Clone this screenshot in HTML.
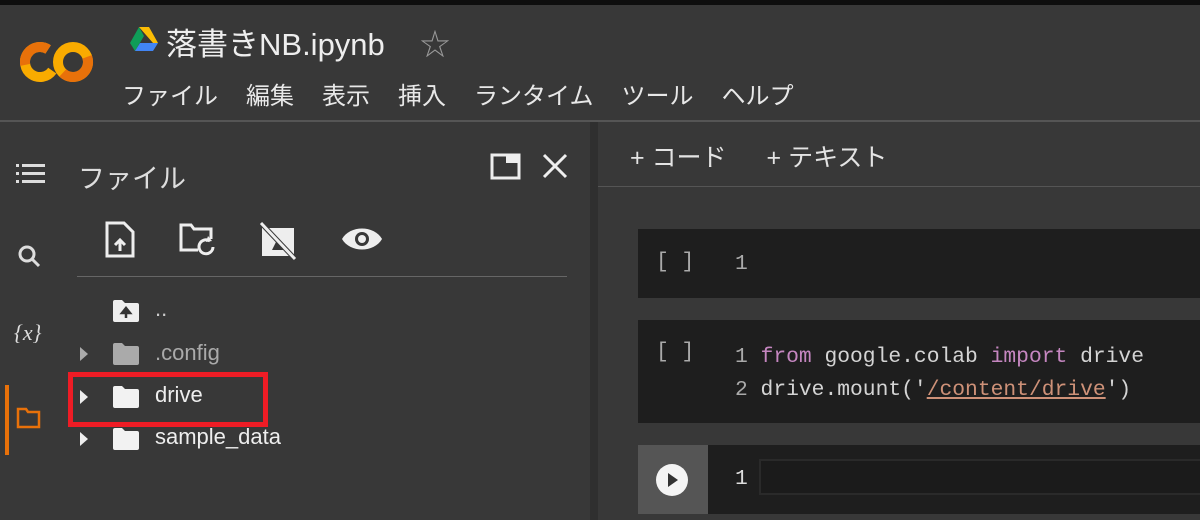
<!DOCTYPE html>
<html><head><meta charset="utf-8"><style>
*{margin:0;padding:0;box-sizing:border-box}
body{width:1200px;height:520px;background:#383838;overflow:hidden;position:relative;font-family:"Liberation Sans","Noto Sans CJK JP",sans-serif;color:#e3e3e3}
.a{position:absolute}
.mono{font-family:"Liberation Mono","Noto Sans CJK JP",monospace;font-size:21.3px;color:#d4d4d4}
</style></head><body>
<div class="a" style="left:0;top:0;width:1200px;height:5px;background:#0e0e0e"></div>
<!-- logo -->
<svg class="a" style="left:20px;top:39px" width="74" height="46" viewBox="0 0 74 46">
<circle cx="53" cy="23" r="15" fill="none" stroke="#f9ab00" stroke-width="10"/>
<circle cx="53" cy="23" r="15" fill="none" stroke="#e8710a" stroke-width="10" stroke-dasharray="40 100" transform="rotate(-20 53 23)"/>
<circle cx="20" cy="23" r="15" fill="none" stroke="#f9ab00" stroke-width="10" stroke-dasharray="70 25" transform="rotate(35 20 23)"/>
<circle cx="20" cy="23" r="15" fill="none" stroke="#e8710a" stroke-width="10" stroke-dasharray="0 35 35 30" transform="rotate(35 20 23)"/>
</svg>
<!-- drive icon -->
<svg class="a" style="left:130px;top:27px" width="28" height="25" viewBox="0 0 28 25">
<polygon points="9,0 19,0 28,16 23,16" fill="#fbbc04"/>
<polygon points="9,0 14,9 5,24 0,16" fill="#0f9d58"/>
<polygon points="5,24 10,16 28,16 23,24" fill="#4285f4"/>
</svg>
<div class="a" style="left:166px;top:19px;font-size:31px;color:#eee">落書きNB.ipynb</div>
<div class="a" style="left:420px;top:20px;font-size:30px;color:#999">☆</div>
<div class="a" style="left:122px;top:76px;font-size:24px;color:#e8e8e8;white-space:nowrap">
<span>ファイル</span><span style="margin-left:28px">編集</span><span style="margin-left:28px">表示</span><span style="margin-left:28px">挿入</span><span style="margin-left:28px">ランタイム</span><span style="margin-left:28px">ツール</span><span style="margin-left:28px">ヘルプ</span></div>
<div class="a" style="left:0;top:120px;width:1200px;height:2px;background:#555"></div>
<!-- left sidebar -->
<svg class="a" style="left:16px;top:163px" width="30" height="22" viewBox="0 0 30 22" fill="#ddd">
<rect x="0" y="1" width="3" height="3"/><rect x="6" y="1" width="23" height="3"/>
<rect x="0" y="9" width="3" height="3"/><rect x="6" y="9" width="23" height="3"/>
<rect x="0" y="17" width="3" height="3"/><rect x="6" y="17" width="23" height="3"/>
</svg>
<svg class="a" style="left:17px;top:244px" width="26" height="26" viewBox="0 0 26 26"><circle cx="10" cy="10" r="7" fill="none" stroke="#ddd" stroke-width="3"/><line x1="15" y1="15" x2="22" y2="22" stroke="#ddd" stroke-width="3"/></svg>
<div class="a" style="left:14px;top:320px;font-size:22px;font-family:'Liberation Serif',serif;font-style:italic;color:#ddd">{<i>x</i>}</div>
<div class="a" style="left:5px;top:385px;width:4px;height:70px;background:#e8710a"></div>
<svg class="a" style="left:16px;top:407px" width="26" height="22" viewBox="0 0 26 22"><path d="M2 2h8l2 3h11v15H2z" fill="none" stroke="#e8710a" stroke-width="2.5"/></svg>
<div class="a" style="left:78px;top:157px;font-size:27px;color:#ddd">ファイル</div>
<svg class="a" style="left:490px;top:152px" width="32" height="28" viewBox="0 0 32 28"><rect x="2" y="3" width="27" height="23" fill="none" stroke="#eee" stroke-width="3"/><rect x="16" y="3" width="13" height="8" fill="#eee"/></svg>
<svg class="a" style="left:541px;top:152px" width="28" height="28" viewBox="0 0 28 28"><path d="M3 3L25 25M25 3L3 25" stroke="#eee" stroke-width="3"/></svg>
<!-- toolbar icons -->
<svg class="a" style="left:104px;top:221px" width="32" height="38" viewBox="0 0 32 38"><path d="M3 2h17l9 9v24H3z" fill="none" stroke="#eee" stroke-width="3"/><path d="M16 30V19M11 24l5-5 5 5" stroke="#eee" stroke-width="3" fill="none"/></svg>
<svg class="a" style="left:178px;top:222px" width="42" height="36" viewBox="0 0 42 36"><path d="M20 28H3V3h10l3 4h17v10" fill="none" stroke="#eee" stroke-width="3"/><path d="M35 25a7 7 0 1 1-3-6" fill="none" stroke="#eee" stroke-width="3"/><path d="M30 14l4 5-6 1z" fill="#eee"/></svg>
<svg class="a" style="left:258px;top:220px" width="42" height="42" viewBox="0 0 42 42"><rect x="4" y="8" width="32" height="28" fill="#eee"/><path d="M14 30l6-12 6 12z" fill="#383838"/><path d="M2 2L38 40" stroke="#383838" stroke-width="5"/><path d="M3 3L37 39" stroke="#eee" stroke-width="3"/></svg>
<svg class="a" style="left:340px;top:225px" width="44" height="28" viewBox="0 0 44 28"><path d="M2 14C10 0 34 0 42 14C34 28 10 28 2 14z" fill="#eee"/><circle cx="22" cy="14" r="7" fill="#383838"/><circle cx="22" cy="14" r="4" fill="#eee"/></svg>
<div class="a" style="left:77px;top:276px;width:490px;height:1px;background:#666"></div>
<!-- file tree -->
<svg class="a" style="left:113px;top:300px" width="26" height="22" viewBox="0 0 26 22"><path d="M0 2a2 2 0 0 1 2-2h7l3 3h12a2 2 0 0 1 2 2v15a2 2 0 0 1-2 2H2a2 2 0 0 1-2-2z" fill="#eee"/><path d="M13 18v-7M9 13l4-5 4 5z" stroke="#333" stroke-width="2.5" fill="#333"/></svg>
<div class="a" style="left:155px;top:296px;font-size:22px;color:#ccc">..</div>
<svg class="a" style="left:80px;top:347px" width="10" height="14"><path d="M0 0l8 7-8 7z" fill="#aaa"/></svg>
<svg class="a" style="left:113px;top:342px" width="26" height="24" viewBox="0 0 26 24"><path d="M0 3a2 2 0 0 1 2-2h7l3 3h12a2 2 0 0 1 2 2v15a2 2 0 0 1-2 2H2a2 2 0 0 1-2-2z" fill="#aaa"/></svg>
<div class="a" style="left:155px;top:340px;font-size:22px;color:#aaa">.config</div>
<svg class="a" style="left:80px;top:390px" width="10" height="14"><path d="M0 0l8 7-8 7z" fill="#eee"/></svg>
<svg class="a" style="left:113px;top:385px" width="26" height="24" viewBox="0 0 26 24"><path d="M0 3a2 2 0 0 1 2-2h7l3 3h12a2 2 0 0 1 2 2v15a2 2 0 0 1-2 2H2a2 2 0 0 1-2-2z" fill="#f2f2f2"/></svg>
<div class="a" style="left:155px;top:382px;font-size:22px;color:#eee">drive</div>
<div class="a" style="left:68px;top:372px;width:200px;height:55px;border:5px solid #ee1c25"></div>
<svg class="a" style="left:80px;top:432px" width="10" height="14"><path d="M0 0l8 7-8 7z" fill="#eee"/></svg>
<svg class="a" style="left:113px;top:427px" width="26" height="24" viewBox="0 0 26 24"><path d="M0 3a2 2 0 0 1 2-2h7l3 3h12a2 2 0 0 1 2 2v15a2 2 0 0 1-2 2H2a2 2 0 0 1-2-2z" fill="#f2f2f2"/></svg>
<div class="a" style="left:155px;top:424px;font-size:22px;color:#eee">sample_data</div>
<!-- divider -->
<div class="a" style="left:590px;top:122px;width:8px;height:398px;background:#2f2f2f"></div>
<div class="a" style="left:598px;top:186px;width:602px;height:1px;background:#555"></div>
<div class="a" style="left:630px;top:138px;font-size:25px;color:#e3e3e3;white-space:nowrap">+ コード<span style="margin-left:40px">+ テキスト</span></div>
<!-- cells -->
<div class="a" style="left:638px;top:229px;width:562px;height:69px;background:#1e1e1e"></div>
<div class="a mono" style="left:656px;top:250px;color:#aaa">[ ]</div>
<div class="a mono" style="left:735px;top:252px;color:#aaa">1</div>
<div class="a" style="left:638px;top:320px;width:562px;height:103px;background:#1e1e1e"></div>
<div class="a mono" style="left:656px;top:340px;color:#aaa">[ ]</div>
<div class="a mono" style="left:735px;top:341px;line-height:33px;white-space:pre"><span style="color:#aaa">1</span> <span style="color:#c586c0">from</span> google.colab <span style="color:#c586c0">import</span> drive
<span style="color:#aaa">2</span> drive.mount('<span style="color:#ce9178;text-decoration:underline">/content/drive</span>')</div>
<div class="a" style="left:638px;top:445px;width:562px;height:69px;background:#1e1e1e"></div>
<div class="a" style="left:638px;top:445px;width:70px;height:69px;background:#555"></div>
<svg class="a" style="left:655px;top:462px" width="34" height="36" viewBox="0 0 34 36"><circle cx="17" cy="18" r="16" fill="#f4f4f4"/><path d="M13 11l10 7-10 7z" fill="#333"/></svg>
<div class="a mono" style="left:735px;top:467px;color:#ddd">1</div>
<div class="a" style="left:759px;top:459px;width:441px;height:36px;border:2px solid #2a2a2a;border-right:none;background:#1b1b1b"></div>
</body></html>
